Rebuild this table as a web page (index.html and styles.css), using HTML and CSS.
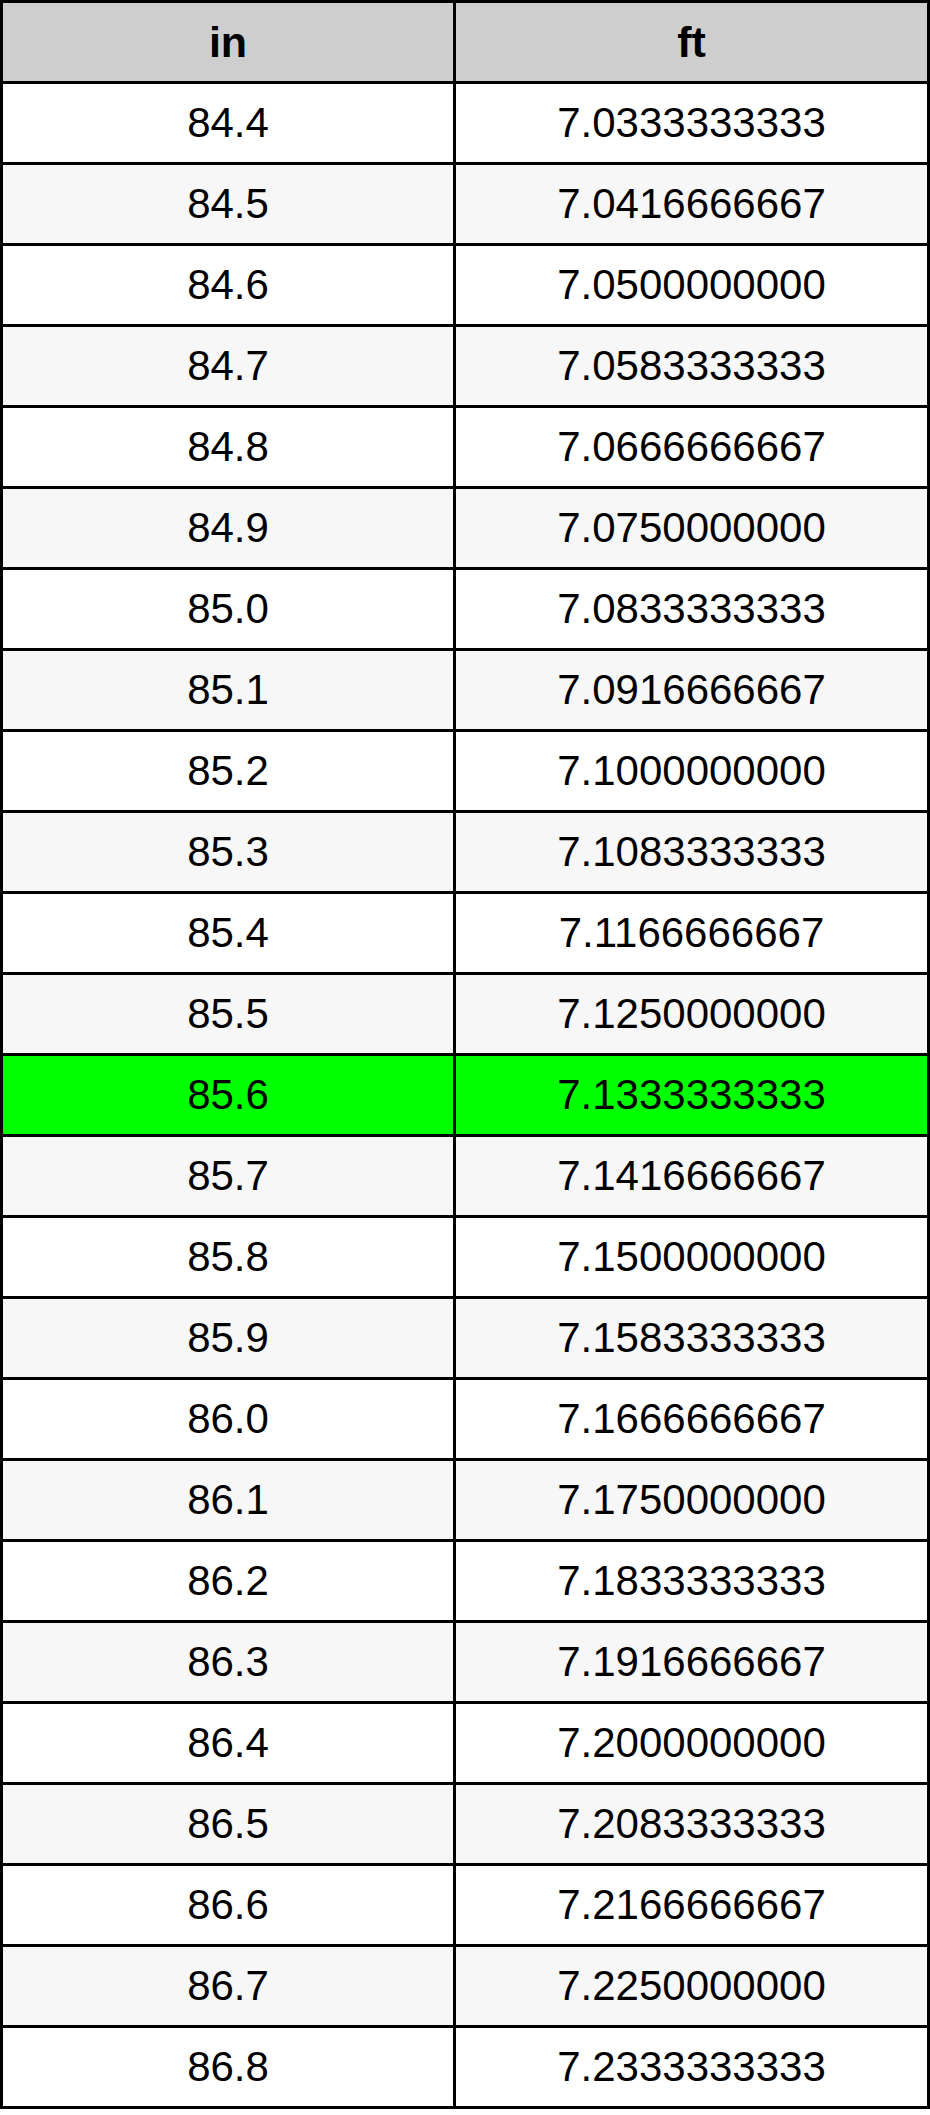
FILE: index.html
```html
<!DOCTYPE html>
<html>
<head>
<meta charset="utf-8">
<title>in to ft</title>
<link rel="stylesheet" href="styles.css">
</head>
<body>
<table class="conv">
<colgroup><col class="c1"><col class="c2"></colgroup>
<thead>
<tr class="head"><th>in</th><th>ft</th></tr>
</thead>
<tbody>
<tr><td>84.4</td><td>7.0333333333</td></tr>
<tr><td>84.5</td><td>7.0416666667</td></tr>
<tr><td>84.6</td><td>7.0500000000</td></tr>
<tr><td>84.7</td><td>7.0583333333</td></tr>
<tr><td>84.8</td><td>7.0666666667</td></tr>
<tr><td>84.9</td><td>7.0750000000</td></tr>
<tr><td>85.0</td><td>7.0833333333</td></tr>
<tr><td>85.1</td><td>7.0916666667</td></tr>
<tr><td>85.2</td><td>7.1000000000</td></tr>
<tr><td>85.3</td><td>7.1083333333</td></tr>
<tr><td>85.4</td><td>7.1166666667</td></tr>
<tr><td>85.5</td><td>7.1250000000</td></tr>
<tr class="hl"><td>85.6</td><td>7.1333333333</td></tr>
<tr><td>85.7</td><td>7.1416666667</td></tr>
<tr><td>85.8</td><td>7.1500000000</td></tr>
<tr><td>85.9</td><td>7.1583333333</td></tr>
<tr><td>86.0</td><td>7.1666666667</td></tr>
<tr><td>86.1</td><td>7.1750000000</td></tr>
<tr><td>86.2</td><td>7.1833333333</td></tr>
<tr><td>86.3</td><td>7.1916666667</td></tr>
<tr><td>86.4</td><td>7.2000000000</td></tr>
<tr><td>86.5</td><td>7.2083333333</td></tr>
<tr><td>86.6</td><td>7.2166666667</td></tr>
<tr><td>86.7</td><td>7.2250000000</td></tr>
<tr><td>86.8</td><td>7.2333333333</td></tr>
</tbody>
</table>
</body>
</html>
```
FILE: styles.css
```css
html, body {
  margin: 0;
  padding: 0;
  background: #ffffff;
}

.conv {
  width: 930px;
  border-collapse: separate;
  border-spacing: 3px;
  background: #000000;
  table-layout: fixed;
  font-family: "Liberation Sans", Arial, sans-serif;
  color: #000000;
}

.conv .c1 {
  width: 450px;
}

.conv th,
.conv td {
  height: 78px;
  padding: 0;
  text-align: center;
  vertical-align: middle;
  background: #ffffff;
  font-size: 42px;
  line-height: 48px;
}

.conv th {
  background: #cecece;
  font-weight: bold;
  font-size: 43px;
}

.conv tbody tr:nth-child(even) td {
  background: #f7f7f7;
}

.conv tbody tr.hl td {
  background: #00ff00;
}
```
